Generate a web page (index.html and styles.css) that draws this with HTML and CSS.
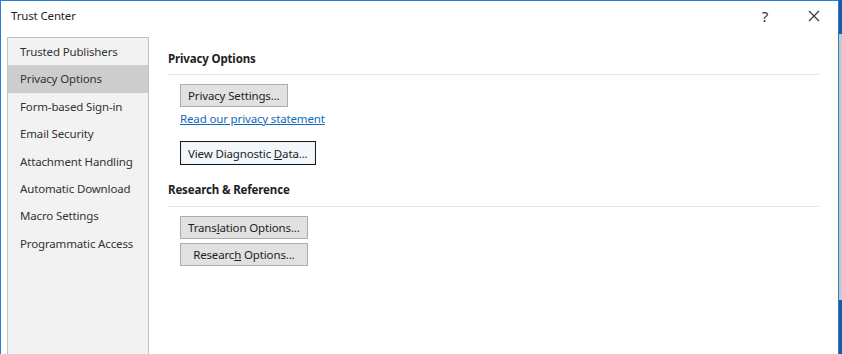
FILE: index.html
```html
<!DOCTYPE html>
<html lang="en">
<head>
  <meta charset="UTF-8">
  <title>Trust Center</title>
  <link rel="stylesheet" href="styles.css">
</head>
<body>
  <div class="dialog">
    <header class="titlebar">
      <span class="title">Trust Center</span>
      <span class="help">?</span>
      <svg class="close" width="12" height="12" viewBox="0 0 12 12">
        <path d="M1 1 L11 11 M11 1 L1 11" stroke="#333" stroke-width="1.1" fill="none"/>
      </svg>
    </header>

    <div class="dialog-body">
      <nav class="sidebar">
        <div class="nav-item">Trusted Publishers</div>
        <div class="nav-item active">Privacy Options</div>
        <div class="nav-item">Form-based Sign-in</div>
        <div class="nav-item">Email Security</div>
        <div class="nav-item">Attachment Handling</div>
        <div class="nav-item">Automatic Download</div>
        <div class="nav-item">Macro Settings</div>
        <div class="nav-item">Programmatic Access</div>
      </nav>

      <main class="content">
        <h2 class="section-title">Privacy Options</h2>
        <div class="section-body">
          <button class="btn btn-settings">Privacy Settings...</button>
          <a class="link" href="#">Read our privacy statement</a>
          <button class="btn btn-focus">View Diagnostic <u>D</u>ata...</button>
        </div>

        <h2 class="section-title research">Research &amp; Reference</h2>
        <div class="section-body">
          <div class="btn-stack">
            <button class="btn">Trans<u>l</u>ation Options...</button>
            <button class="btn">Researc<u>h</u> Options...</button>
          </div>
        </div>
      </main>
    </div>
  </div>
  <div class="behind"></div>
</body>
</html>
```

FILE: styles.css
```css
html, body {
  margin: 0;
  padding: 0;
  height: 100%;
}

body {
  display: flex;
  background-color: #ffffff;
  font-family: 'Noto Sans', sans-serif;
  font-size: 11.5px;
  letter-spacing: -0.15px;
  color: #1e1e1e;
  overflow: hidden;
}

.dialog {
  width: 837px;
  height: 360px;
  border: 1px solid #2b7cd3;
  border-bottom: none;
  background-color: #ffffff;
  display: flex;
  flex-direction: column;
}

.behind {
  flex: 1;
  background: linear-gradient(#1d5d9f 0, #1d5d9f 34px, #c9c9c9 34px, #c9c9c9 300px, #1d5d9f 300px);
}

.titlebar {
  height: 29px;
  padding-bottom: 7px;
  display: flex;
  align-items: center;
  padding-left: 10px;
}

.title {
  flex: 1;
  color: #1e1e1e;
}

.help {
  font-size: 15px;
  color: #333;
  margin-right: 40px;
}

.close {
  margin-right: 18px;
}

.dialog-body {
  flex: 1;
  display: flex;
}

.sidebar {
  width: 140px;
  margin-left: 6px;
  border: 1px solid #c3c3c3;
  border-bottom: none;
  background-color: #f2f2f2;
}

.nav-item {
  height: 27.4px;
  line-height: 27.4px;
  padding-left: 12px;
  white-space: nowrap;
  color: #333;
}

.nav-item.active {
  background-color: #cdcdcd;
}

.content {
  flex: 1;
  margin-left: 19px;
  margin-right: 19px;
  padding-top: 14px;
}

.section-title {
  margin: 0;
  font-size: 11.5px;
  font-weight: 700;
  line-height: 16px;
  padding-bottom: 7px;
  border-bottom: 1px solid #e6e6e6;
  color: #1e1e1e;
}

.section-title.research {
  margin-top: 17px;
  padding-bottom: 8px;
}

.section-body {
  padding-left: 12px;
  display: flex;
  flex-direction: column;
  align-items: flex-start;
}

.btn {
  font-family: inherit;
  font-size: 11.5px;
  letter-spacing: -0.15px;
  color: #1e1e1e;
  background-color: #e1e1e1;
  border: 1px solid #adadad;
  height: 23px;
  padding: 0 7px;
  margin: 0;
  border-radius: 0;
}

.btn-settings {
  margin-top: 9px;
}

.btn-focus {
  height: 24px;
  margin-top: 14px;
  background-color: #f2f7fc;
  border: 1px solid #1a1a1a;
  box-shadow: inset 0 0 0 1px #e5f1fb;
}

.link {
  margin-top: 4px;
  line-height: 16px;
  color: #0f6cbd;
  text-decoration: underline;
}

.btn-stack {
  margin-top: 9px;
  display: grid;
  grid-template-columns: max-content;
  gap: 4px;
}
```
